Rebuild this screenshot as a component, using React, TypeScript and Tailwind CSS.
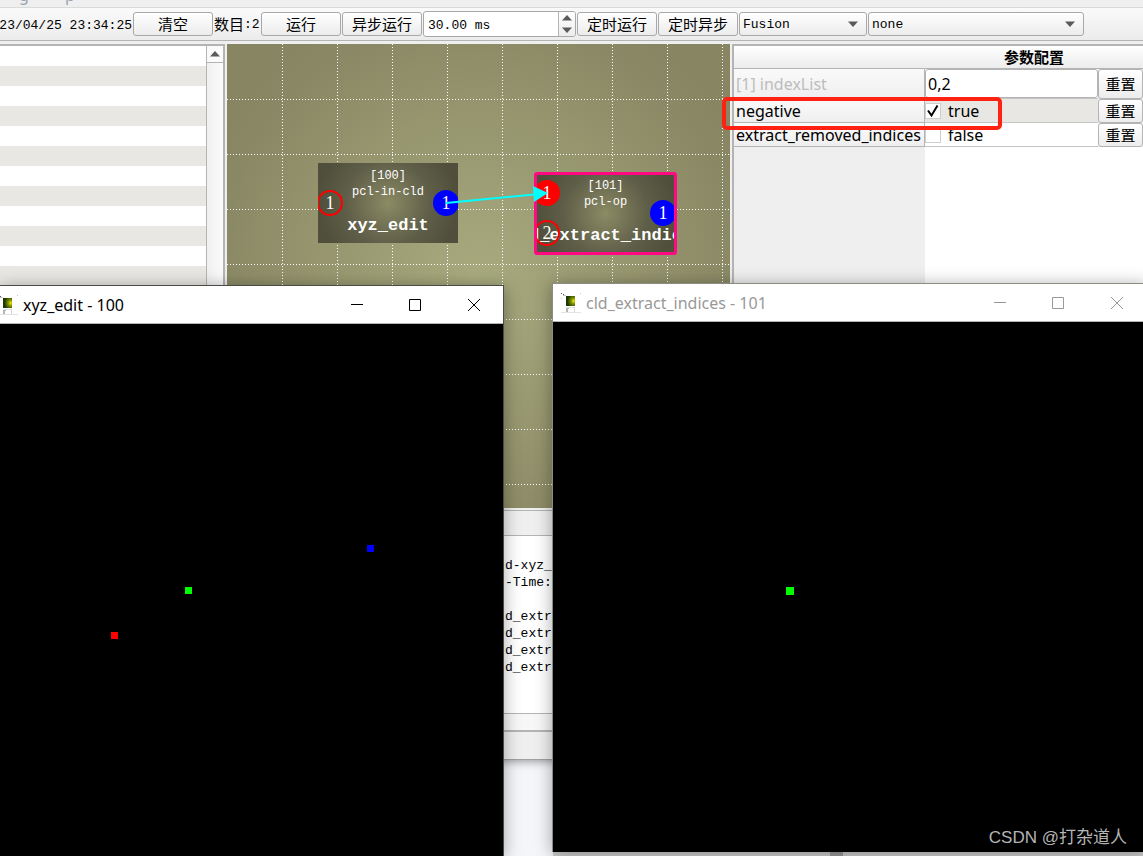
import React from 'react';
import clsx from 'clsx';

const MONO = "font-['Liberation_Mono','Noto_Sans_CJK_SC',monospace]";
const UI = "font-['Noto_Sans','Noto_Sans_CJK_SC',sans-serif]";
const SONG = "font-['Noto_Sans_CJK_SC',sans-serif]";

const GRID = 55;

const logLines = ['', 'd-xyz_', '-Time:', '', 'd_extr', 'd_extr', 'd_extr', 'd_extr'];

interface Port {
  label: string;
  place: string;
  look: string;
}

interface GraphNodeProps {
  id: string;
  kind: string;
  name: string;
  place: string;
  selected?: boolean;
  ports: Port[];
}

interface ViewerWindowProps {
  title: string;
  active?: boolean;
  place: string;
  points: string[];
}

const ToolButton: React.FC<{ children: React.ReactNode }> = ({ children }) => (
  <button
    type="button"
    className={clsx(
      SONG,
      'h-6 w-20 shrink-0 rounded-[3px] border border-[#a9a9a9] bg-linear-to-b from-white to-[#ececec] pb-0.5 text-[15px] leading-none text-black',
    )}
  >
    {children}
  </button>
);

const Caret: React.FC<{ up?: boolean; className?: string }> = ({ up, className }) => (
  <svg width="10" height="6" viewBox="0 0 10 6" className={className} aria-hidden="true">
    <path d={up ? 'M0 5.5 L5 0 L10 5.5 Z' : 'M0 0.5 L10 0.5 L5 6 Z'} fill="#5a5a5a" />
  </svg>
);

const Combo: React.FC<{ label: string; value: string; width: string }> = ({ label, value, width }) => (
  <div className={clsx('relative h-6 shrink-0', width)}>
    <select
      aria-label={label}
      defaultValue={value}
      className={clsx(
        MONO,
        'block h-full w-full appearance-none rounded-[3px] border border-[#a9a9a9] bg-linear-to-b from-white to-[#ececec] pt-0.5 pl-[3px] text-[13px] text-black',
      )}
    >
      <option>{value}</option>
    </select>
    <Caret className="pointer-events-none absolute top-[9px] right-[9px]" />
  </div>
);

const Toolbar: React.FC = () => (
  <div className="flex h-[34px] items-center gap-px border-t border-b border-t-[#dadada] border-b-[#b4b4b4] bg-linear-to-b from-[#fafafa] to-[#ececec]">
    <div className={clsx(MONO, 'flex w-[132px] shrink-0 justify-end overflow-hidden pt-1 text-[13px] whitespace-nowrap')}>
      2023/04/25 23:34:25
    </div>
    <ToolButton>清空</ToolButton>
    <div className="flex w-[46px] shrink-0 items-center whitespace-nowrap">
      <span className={clsx(SONG, 'text-[15px] leading-5')}>数目</span>
      <span className={clsx(MONO, 'pt-0.5 text-[13px]')}>:2</span>
    </div>
    <ToolButton>运行</ToolButton>
    <ToolButton>异步运行</ToolButton>
    <div className="flex h-[26px] w-[153px] shrink-0 overflow-hidden rounded-[3px] border border-[#a9a9a9] bg-white">
      <input
        aria-label="间隔"
        defaultValue="30.00 ms"
        className={clsx(MONO, 'min-w-0 flex-1 px-1 pt-1 text-[13px] outline-none')}
      />
      <div className="flex w-[17px] flex-col border-l border-[#b4b4b4] bg-linear-to-b from-white to-[#ececec]">
        <button type="button" aria-label="增加" className="flex flex-1 items-center justify-center">
          <Caret up />
        </button>
        <button type="button" aria-label="减少" className="flex flex-1 items-center justify-center">
          <Caret />
        </button>
      </div>
    </div>
    <ToolButton>定时运行</ToolButton>
    <ToolButton>定时异步</ToolButton>
    <Combo label="风格" value="Fusion" width="w-32" />
    <Combo label="主题" value="none" width="w-[216px]" />
  </div>
);

const NodeList: React.FC = () => (
  <div className="flex w-[225px] shrink-0 border-t-2 border-r-2 border-[#b4b4b4] bg-white">
    <ul className="min-w-0 flex-1">
      {Array.from({ length: 20 }, (_, i) => (
        <li key={i} className={clsx('h-5', i % 2 ? 'bg-[#e8e7e3]' : 'bg-white')} />
      ))}
    </ul>
    <div className="w-[17px] border-l border-[#b4b4b4] bg-linear-to-r from-[#f0f0f0] to-[#fbfbfb]">
      <button
        type="button"
        aria-label="向上滚动"
        className="flex h-[17px] w-full items-center justify-center border-b border-[#b4b4b4] bg-[#fafafa]"
      >
        <Caret up />
      </button>
    </div>
  </div>
);

const GraphNode: React.FC<GraphNodeProps> = ({ id, kind, name, place, selected, ports }) => (
  <div
    className={clsx(
      'absolute overflow-hidden bg-[radial-gradient(circle_at_center,#8b8b65_0,#5f5e48_42px,#504f3b_70px)] text-white',
      MONO,
      place,
      selected && 'rounded-[3px] border-3 border-[#ff0a82]',
    )}
  >
    <div
      className={clsx(
        'flex flex-col items-center text-xs leading-4 whitespace-nowrap',
        selected ? 'pt-[3px]' : 'pt-[5px]',
      )}
    >
      <span>{id}</span>
      <span>{kind}</span>
    </div>
    <div className="flex justify-center pt-4 text-[17px] leading-5 font-bold whitespace-nowrap">{name}</div>
    {ports.map((port) => (
      <span
        key={port.place}
        className={clsx(
          "absolute flex size-[26px] items-center justify-center rounded-full border-2 font-['Liberation_Serif',serif] text-lg leading-none",
          port.place,
          port.look,
        )}
      >
        {port.label}
      </span>
    ))}
  </div>
);

const GraphCanvas: React.FC = () => (
  <section className="relative h-[464px] overflow-hidden bg-[radial-gradient(circle_at_center,#a8aa7e_0,#878562_290px)]">
    <svg className="absolute inset-0 h-full w-full" aria-hidden="true">
      {Array.from({ length: 20 }, (_, i) => (
        <g key={i} stroke="#fff" strokeWidth="1" strokeDasharray="1 2">
          <line x1={(i + 1) * GRID + 0.5} y1="0" x2={(i + 1) * GRID + 0.5} y2="100%" />
          <line x1="0" y1={(i + 1) * GRID + 0.5} x2="100%" y2={(i + 1) * GRID + 0.5} />
        </g>
      ))}
    </svg>
    <GraphNode
      id="[100]"
      kind="pcl-in-cld"
      name="xyz_edit"
      place="left-[91px] top-[119px] h-20 w-[140px]"
      ports={[
        { label: '1', place: '-left-px top-[27px]', look: 'border-[#ff0000]' },
        { label: '1', place: '-right-px top-[27px]', look: 'border-[#0000ff] bg-[#0000ff]' },
      ]}
    />
    <GraphNode
      id="[101]"
      kind="pcl-op"
      name="cld_extract_indices"
      place="left-[307px] top-[128px] h-[83px] w-[143px]"
      selected
      ports={[
        { label: '1', place: '-left-[3px] top-[5px]', look: 'border-[#ff0000] bg-[#ff0000]' },
        { label: '2', place: '-left-[3px] top-[45px]', look: 'border-[#ff0000]' },
        { label: '1', place: '-right-[2px] top-[25px]', look: 'border-[#0000ff] bg-[#0000ff]' },
      ]}
    />
    <svg className="absolute inset-0 h-full w-full" aria-hidden="true">
      <line x1="219" y1="159" x2="312" y2="150" stroke="#00ffff" strokeWidth="2" />
      <path d="M306 142 L321 149 L307 158 Z" fill="#00ffff" />
    </svg>
  </section>
);

const LogPanel: React.FC = () => (
  <section className="mt-0.5 flex flex-col border-t border-[#b4b4b4]">
    <div className="h-[25px] border-b border-[#b4b4b4] bg-[#efefef]" />
    <pre className={clsx(MONO, 'h-[177px] overflow-hidden bg-white pt-1 pl-[278px] text-[13px] leading-[17px]')}>
      {logLines.join('\n')}
    </pre>
    <div className="h-[19px] border-t border-b-2 border-[#b4b4b4] bg-[#f7f7f7]" />
    <div className="h-7 border-b border-[#a0a0a0] bg-[#efefef]" />
  </section>
);

const ResetButton: React.FC = () => (
  <button
    type="button"
    className="block h-full w-full rounded-[3px] border border-[#b4b4b4] bg-linear-to-b from-white to-[#ececec] text-[15px] leading-none text-black"
  >
    重置
  </button>
);

const labelCell =
  'border-r border-b border-[#b4b4b4] bg-linear-to-b from-[#fafafa] to-[#efefef] p-0 pl-0.5 text-left font-normal whitespace-nowrap';

const CheckRow: React.FC<{ name: string; checked?: boolean; shade: string }> = ({ name, checked, shade }) => (
  <tr className="h-6">
    <th scope="row" className={labelCell}>
      <label htmlFor={name}>{name}</label>
    </th>
    <td className={clsx('border-b border-[#c4c4c4] p-0', shade)}>
      <div className="flex items-center gap-[7px]">
        <span className="relative size-4 shrink-0">
          <input
            id={name}
            type="checkbox"
            defaultChecked={checked}
            className="peer block size-4 appearance-none border border-[#cfcfcf] bg-white"
          />
          <svg
            viewBox="0 0 16 16"
            className="pointer-events-none absolute inset-0 hidden size-4 peer-checked:block"
            aria-hidden="true"
          >
            <path d="M3 7.5 L6.5 12.5 L12.5 2.5" fill="none" stroke="#000" strokeWidth="2" />
          </svg>
        </span>
        <span>{checked ? 'true' : 'false'}</span>
      </div>
    </td>
    <td className="p-0">
      <div className="h-6">
        <ResetButton />
      </div>
    </td>
  </tr>
);

const ParamPanel: React.FC = () => (
  <section className="relative ml-0.5 flex w-[411px] shrink-0 flex-col border-t-2 border-l-2 border-[#b4b4b4] bg-[#efefef]">
    <table className={clsx(UI, 'w-full table-fixed border-separate border-spacing-0 text-base leading-5')}>
      <colgroup>
        <col className="w-[191px]" />
        <col />
        <col className="w-[45px]" />
      </colgroup>
      <thead>
        <tr>
          <th
            colSpan={3}
            className="h-[23px] border-b border-[#b4b4b4] bg-linear-to-b from-white to-[#ececec] p-0 pl-[270px] text-left text-[15px] leading-none"
          >
            参数配置
          </th>
        </tr>
      </thead>
      <tbody>
        <tr className="h-[30px]">
          <th scope="row" className={clsx(labelCell, 'text-[#bdbdbd]')}>
            <label htmlFor="indexList">[1] indexList</label>
          </th>
          <td className="border-b border-[#c4c4c4] bg-white p-0">
            <input
              id="indexList"
              defaultValue="0,2"
              className="block h-[29px] w-full rounded-[3px] border border-[#b4b4b4] bg-white px-0.5 outline-none"
            />
          </td>
          <td className="p-0">
            <div className="h-[30px]">
              <ResetButton />
            </div>
          </td>
        </tr>
        <CheckRow name="negative" checked shade="bg-[#e8e7e3]" />
        <CheckRow name="extract_removed_indices" shade="bg-white" />
      </tbody>
    </table>
    <div className="ml-[191px] flex-1 bg-white" />
    {/* callout around the "negative" row */}
    <div className="pointer-events-none absolute top-[51px] -left-3 h-[33px] w-[280px] rounded-[5px] border-4 border-[#ff2213]" />
  </section>
);

const AppIcon: React.FC = () => (
  <svg width="20" height="20" viewBox="0 0 20 20" className="shrink-0" aria-hidden="true">
    <defs>
      <radialGradient id="iconGlow" cx="0.85" cy="0.5" r="0.7">
        <stop offset="0" stopColor="#f4f000" />
        <stop offset="0.35" stopColor="#8a9c00" />
        <stop offset="1" stopColor="#1d3800" />
      </radialGradient>
    </defs>
    <path d="M0 0h1v1h-1z M2 1h1v1h-1z" fill="#555" />
    <path d="M0 5h1v1h-1z M2 2h3v1h-3z M19 0h1v1h-1z" fill="#c5c5c5" />
    <rect x="5" y="3" width="9" height="10" fill="url(#iconGlow)" />
    <path d="M5 14h9v1h-9z M0 19h20v1h-20z" fill="#e3e3e3" />
    <path d="M5 15h3v1h-1v3h-2z" fill="#b5b5b5" />
    <path d="M13 14h1v5h-1z" fill="#d5d5d5" />
  </svg>
);

const ViewerWindow: React.FC<ViewerWindowProps> = ({ title, active, place, points }) => (
  <section
    className={clsx(
      'absolute flex flex-col border-t border-r shadow-[0_2px_16px_rgba(0,0,0,0.35)]',
      active ? 'border-[#4b4b45]' : 'border-l border-[#8c8c84]',
      place,
    )}
  >
    <header
      className={clsx(
        UI,
        'flex h-[38px] shrink-0 items-center border-b border-[#b4b4b4] bg-white text-base',
        active ? 'text-black' : 'pl-2 text-[#999]',
      )}
    >
      <span className={clsx('flex flex-1 items-center gap-[5px] whitespace-nowrap', active && '-ml-0.5')}>
        <AppIcon />
        {title}
      </span>
      <button type="button" aria-label="最小化" className="flex h-full w-[58px] items-center justify-center">
        <svg width="12" height="12" viewBox="0 0 12 12" stroke="currentColor" fill="none">
          <path d="M0 5.5h12" />
        </svg>
      </button>
      <button type="button" aria-label="最大化" className="flex h-full w-[58px] items-center justify-center">
        <svg width="12" height="12" viewBox="0 0 12 12" stroke="currentColor" fill="none">
          <path d="M0.5 0.5h11v11h-11z" />
        </svg>
      </button>
      <button type="button" aria-label="关闭" className="flex h-full w-[59px] items-center justify-center">
        <svg width="12" height="12" viewBox="0 0 12 12" stroke="currentColor" fill="none">
          <path d="M0 0L12 12M12 0L0 12" />
        </svg>
      </button>
    </header>
    <div className="relative flex-1 bg-black">
      {points.map((point) => (
        <span key={point} className={clsx('absolute', point)} />
      ))}
    </div>
  </section>
);

export default function App() {
  return (
    <main className="relative h-screen overflow-hidden bg-[#f4f6f9] text-black">
      <div className="flex flex-col bg-[#efefef] shadow-[0_0_10px_rgba(0,0,0,0.5)]">
        <div className={clsx(UI, 'flex h-[7px] items-end overflow-hidden pb-[3px] text-base leading-[18px] text-[#9aa4b0]')}>
          <span className="ml-[19px] w-[46px]">g</span>
          <span>p</span>
        </div>
        <Toolbar />
        <div className="flex pt-[3px]">
          <NodeList />
          <div className="ml-0.5 flex min-w-0 flex-1 flex-col">
            <GraphCanvas />
            <LogPanel />
          </div>
          <ParamPanel />
        </div>
      </div>

      <div className="absolute right-0 bottom-0 left-[553px] flex h-1 bg-[#cfcfcf]">
        <div className="ml-[277px] w-[13px] bg-[#9c9c9c]" />
      </div>

      <ViewerWindow
        title="xyz_edit - 100"
        active
        place="top-[285px] left-0 bottom-0 w-[504px]"
        points={[
          'left-[111px] top-[308px] size-[7px] bg-[#ff0000]',
          'left-[185px] top-[263px] size-[7px] bg-[#00ff00]',
          'left-[367px] top-[221px] size-[7px] bg-[#0000ff]',
        ]}
      />
      <ViewerWindow
        title="cld_extract_indices - 101"
        place="top-[283px] left-[552px] -right-1 bottom-1"
        points={['left-[233px] top-[265px] size-2 bg-[#00ff00]']}
      />

      <p className="absolute right-4 bottom-1.5 font-['Liberation_Sans','Noto_Sans_CJK_SC',sans-serif] text-[17px] leading-6 text-[#b5b5b5]">
        CSDN @打杂道人
      </p>
    </main>
  );
}
